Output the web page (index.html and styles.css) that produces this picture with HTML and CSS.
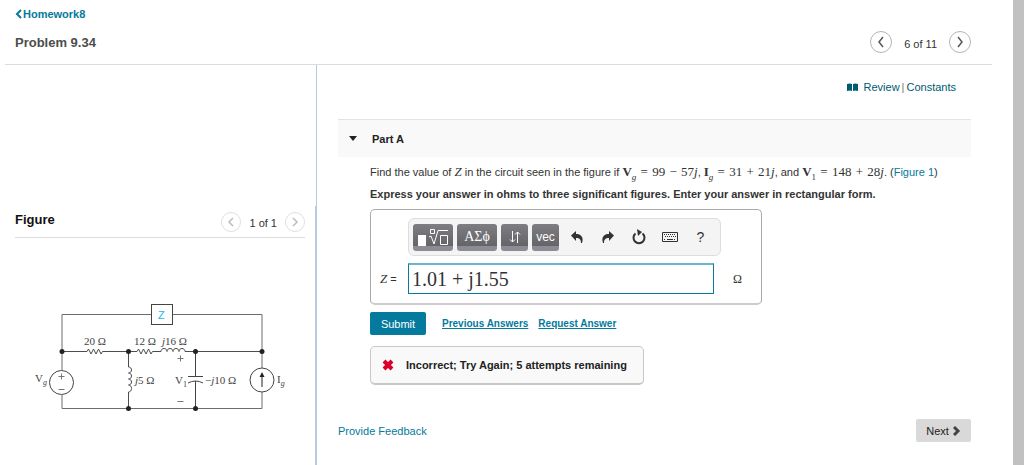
FILE: index.html
```html
<!DOCTYPE html>
<html lang="en">
<head>
    <meta charset="UTF-8">
    <meta name="viewport" content="width=device-width, initial-scale=1.0">
    <title>Problem 9.34</title>
    <link rel="stylesheet" href="styles.css">
</head>
<body>
    <div class="page">
        <header class="header">
            <div>
                <a class="back" href="#"><svg width="7" height="10" viewBox="0 0 7 10"><path d="M6 1L2 5l4 4" fill="none" stroke="currentColor" stroke-width="2"/></svg>Homework8</a>
                <h1>Problem 9.34</h1>
            </div>
            <div class="pager">
                <button class="round" aria-label="Previous problem"><svg width="8" height="12" viewBox="0 0 8 12"><path d="M6 1L2 6l4 5"/></svg></button>
                <span>6 of 11</span>
                <button class="round" aria-label="Next problem"><svg width="8" height="12" viewBox="0 0 8 12"><path d="M2 1l4 5-4 5"/></svg></button>
            </div>
        </header>

        <div class="columns">
            <aside class="left">
                <div class="left-top"></div>
                <div class="left-bottom">
                    <div class="figure-head">
                        <h2>Figure</h2>
                        <div class="pager small">
                            <button class="round" aria-label="Previous figure"><svg width="8" height="10" viewBox="0 0 8 10"><path d="M6 1L2 5l4 4"/></svg></button>
                            <span>1 of 1</span>
                            <button class="round" aria-label="Next figure"><svg width="8" height="10" viewBox="0 0 8 10"><path d="M2 1l4 4-4 4"/></svg></button>
                        </div>
                    </div>

                    <svg class="circuit" width="260" height="120" viewBox="30 298 260 120">
                        <g fill="none" stroke="#6d6d6d">
                            <!-- outer loop -->
                            <path d="M62 370V314.500H151M172 314.500H262V368M262 392V408.500H62V395"/>
                            <!-- middle rail with resistors and coil -->
                            <path d="M62 351.500H87l1.500-2.500 2.500 5 2.500-5 2.500 5 2.500-5 2.500 5 1.500-2.500H137l1.500-2.500 2.500 5 2.500-5 2.500 5 2.500-5 2.500 5 1.500-2.500H161c0-4 6-4 6 0 0-4 6-4 6 0 0-4 6-4 6 0 0-4 6-4 6 0H262" stroke="#4d4d4d"/>
                            <!-- vertical coil -->
                            <path d="M128.500 352V367c4 0 4 6 0 6 4 0 4 6 0 6 4 0 4 6 0 6 4 0 4 7 0 7V408" stroke="#4d4d4d"/>
                            <!-- capacitor -->
                            <path d="M195.500 352V376M195.500 381V408M188 376.500H203M188 383q7.500-4 15 0" stroke="#444"/>
                            <rect x="151.500" y="304.500" width="21" height="20" stroke="#444"/>
                            <circle cx="61.500" cy="382.500" r="12" stroke="#444"/>
                            <circle cx="262" cy="380" r="12" stroke="#444"/>
                            <path d="M262 387V375" stroke="#222"/>
                            <path d="M58.500 376.500h6M61.500 373.500v6M58.500 389.500h6M177.500 358.500h6M180.500 355.500v6M177.500 401.500h6" stroke="#777"/>
                        </g>
                        <g fill="#222">
                            <path d="M262 372l2.500 5h-5z"/>
                            <circle cx="62" cy="351.500" r="2.500"/>
                            <circle cx="128.500" cy="351.500" r="2.500"/>
                            <circle cx="195.500" cy="351.500" r="2.500"/>
                            <circle cx="262" cy="351.500" r="2.500"/>
                            <circle cx="128.500" cy="408.500" r="2.500"/>
                            <circle cx="195.500" cy="408.500" r="2.500"/>
                        </g>
                        <g class="labels">
                            <text x="84" y="345">20 Ω</text>
                            <text x="134" y="345">12 Ω</text>
                            <text x="162" y="345"><tspan font-style="italic">j</tspan>16 Ω</text>
                            <text x="135" y="384"><tspan font-style="italic">j</tspan>5 Ω</text>
                            <text x="205" y="384">−<tspan font-style="italic">j</tspan>10 Ω</text>
                            <text x="35" y="382">V<tspan class="sub" dy="3" font-style="italic">g</tspan></text>
                            <text x="175" y="384">V<tspan class="sub" dy="3">1</tspan></text>
                            <text x="277" y="383">I<tspan class="sub" dy="3" font-style="italic">g</tspan></text>
                            <text class="z" x="158" y="319">Z</text>
                        </g>
                    </svg>
                </div>
            </aside>

            <main class="right">
                <div class="links">
                    <svg width="11" height="9" viewBox="0 0 11 9"><path d="M0 1q3-1 5 0v7q-2-1-5 0zM6 1q2-1 5 0v7q-3-1-5 0z" fill="currentColor"/></svg>
                    <a href="#">Review</a><span class="bar">|</span><a href="#">Constants</a>
                </div>

                <h2 class="part"><span class="arrow"></span>Part A</h2>

                <div class="content">
                    <p>Find the value of <i class="math">Z</i> in the circuit seen in the figure if <span class="math"><b>V</b><sub><i>g</i></sub> <span class="op">=</span> 99 <span class="op">−</span> 57<i>j</i></span>, <span class="math"><b>I</b><sub><i>g</i></sub> <span class="op">=</span> 31 <span class="op">+</span> 21<i>j</i></span>, and <span class="math"><b>V</b><sub>1</sub> <span class="op">=</span> 148 <span class="op">+</span> 28<i>j</i></span>. (<a href="#">Figure 1</a>)</p>
                    <p class="strong">Express your answer in ohms to three significant figures. Enter your answer in rectangular form.</p>

                    <div class="answer">
                        <div class="toolbar">
                            <button class="key wide" aria-label="Templates"><svg width="32" height="20" viewBox="0 0 32 20"><path d="M1 8h8v11H1z" fill="#fff"/><path d="M13.500 2.500h4v4h-4zM12 10l2-1 3 8 4-13.500h10M23.500 8.500h7v9h-7z" fill="none" stroke="#fff"/></svg></button>
                            <button class="key wide greek">ΑΣϕ</button>
                            <button class="key" aria-label="Subscript and superscript"><svg width="12" height="14" viewBox="0 0 12 14"><path d="M3.500 1v11M1 9.500L3.500 12 6 9.500M8.500 13V2M6 4.500L8.500 2 11 4.500" fill="none" stroke="#fff"/></svg></button>
                            <button class="key">vec</button>
                            <button class="tool" aria-label="Undo"><svg width="12" height="12" viewBox="0 0 12 12"><path d="M0 4.500L5 0v3c5 0 8 3 6 9h-1c0-3-1-5-5-5v3z" fill="currentColor"/></svg></button>
                            <button class="tool" aria-label="Redo"><svg width="12" height="12" viewBox="0 0 12 12"><path d="M12 4.500L7 0v3C2 3-1 6 1 12h1c0-3 1-5 5-5v3z" fill="currentColor"/></svg></button>
                            <button class="tool" aria-label="Reset"><svg width="14" height="16" viewBox="0 0 14 16"><path d="M3.500 4.500a5.500 5.500 0 1 0 7 0" fill="none" stroke="currentColor" stroke-width="2"/><path d="M5 0l5 3-4 4z" fill="currentColor"/></svg></button>
                            <button class="tool" aria-label="Keyboard"><svg width="16" height="10" viewBox="0 0 16 10"><path d="M.500.500h15v9H.500z" fill="none" stroke="currentColor"/><path d="M2 2.500h12M3 4.500h11M2 7.500h2M12 7.500h2" fill="none" stroke="currentColor" stroke-dasharray="1 1"/><path d="M5 7.500h6" stroke="currentColor"/></svg></button>
                            <button class="tool help" aria-label="Help">?</button>
                        </div>
                        <div class="entry">
                            <label for="answer"><i>Z</i> =</label>
                            <input id="answer" type="text" value="1.01 + j1.55">
                            <span class="unit">Ω</span>
                        </div>
                    </div>

                    <div class="actions">
                        <button class="submit">Submit</button>
                        <a href="#">Previous Answers</a>
                        <a href="#">Request Answer</a>
                    </div>

                    <div class="feedback">
                        <svg width="12" height="12" viewBox="0 0 12 12"><path d="M2 2l8 8M10 2l-8 8" stroke="#d9002b" stroke-width="4"/></svg>
                        Incorrect; Try Again; 5 attempts remaining
                    </div>
                </div>

                <footer class="footer">
                    <a href="#">Provide Feedback</a>
                    <button class="next">Next <svg width="8" height="10" viewBox="0 0 8 10"><path d="M1 1l4 4-4 4" fill="none" stroke="#444" stroke-width="3"/></svg></button>
                </footer>
            </main>
        </div>
    </div>
</body>
</html>
```

FILE: styles.css
```css
* {
    box-sizing: border-box;
}
body {
    margin: 0;
    font-family: "Liberation Sans", Arial, sans-serif;
    font-size: 11px;
    line-height: 16px;
    color: #333;
    background: #fff;
}
.page {
    min-height: 100vh;
    display: flex;
    flex-direction: column;
    padding: 0 21px 0 5px;
    border-right: 11px solid #c1c1c1;
}
h1, h2, p {
    margin: 0;
}
a {
    color: #047a9c;
    text-decoration: none;
}
button {
    font-family: inherit;
    font-size: 11px;
    padding: 0;
    border: 0;
    cursor: pointer;
}
svg {
    flex: none;
}

/* header */
.header {
    display: flex;
    justify-content: space-between;
    height: 65px;
    padding: 6px 21px 0 10px;
    border-bottom: 1px solid #dcdcdc;
}
.back {
    display: flex;
    align-items: center;
    gap: 1px;
    font-weight: bold;
}
h1 {
    margin-top: 13px;
    font-size: 13px;
    color: #4d4d4d;
}
.pager {
    display: flex;
    align-items: center;
    gap: 12px;
}
.pager span {
    padding-top: 3px;
}
.header .pager {
    align-self: flex-start;
    margin-top: 25px;
}
.round {
    display: flex;
    align-items: center;
    justify-content: center;
    width: 22px;
    height: 22px;
    border: 1px solid #b5b5b5;
    border-radius: 50%;
    background: #fff;
}
.round path {
    fill: none;
    stroke: #555;
    stroke-width: 1.5;
}
.small {
    gap: 8px;
}
.small .round {
    width: 20px;
    height: 20px;
    border-color: #e0e0e0;
}
.small .round path {
    stroke: #bbb;
}

/* figure column */
.columns {
    display: flex;
    flex: 1;
}
.left {
    display: flex;
    flex-direction: column;
    flex: 0 0 312px;
}
.left-top {
    height: 141px;
    border-right: 1px solid #b8cbdc;
}
.left-bottom {
    flex: 1;
    padding: 0 10px;
    border-right: 2px solid #b8cbdc;
}
.figure-head {
    display: flex;
    justify-content: space-between;
    align-items: center;
    height: 32px;
    border-bottom: 1px solid #dcdcdc;
}
.figure-head h2 {
    font-size: 13px;
    margin-bottom: 4px;
    color: #111;
}
.circuit {
    display: block;
    margin: 60px 0 0 15px;
}
.labels {
    font-family: "Liberation Serif", "Times New Roman", serif;
    font-size: 11px;
    fill: #444;
}
.sub {
    font-size: 8px;
}
.labels .z {
    font-family: "Liberation Sans", Arial, sans-serif;
    fill: #1fb5e0;
}

/* problem column */
.right {
    flex: 1;
    padding: 14px 21px 0;
}
.links {
    display: flex;
    align-items: center;
    justify-content: flex-end;
    padding-right: 15px;
    color: #005a70;
}
.links svg {
    margin-right: 6px;
}
.links a {
    color: #005a70;
}
.bar {
    margin: 0 2px;
    color: #777;
}
.part {
    display: flex;
    align-items: center;
    gap: 15px;
    height: 38px;
    margin-top: 24px;
    padding-left: 11px;
    font-size: 11px;
    color: #222;
    background: #f9f9f9;
    border-top: 1px solid #e3e3e3;
}
.arrow {
    border: 4px solid transparent;
    border-top: 5px solid #222;
    border-bottom: 0;
}
.content {
    padding: 4px 0 0 32px;
}
.content p {
    line-height: 22px;
}
.strong {
    font-weight: bold;
}
.math {
    font-family: "Liberation Serif", "Times New Roman", serif;
    font-size: 13px;
}
.math sub {
    font-size: 9px;
    line-height: 0;
}
.op {
    margin: 0 1px;
}
.answer {
    max-width: 392px;
    margin-top: 4px;
    padding: 8px 8px 9px;
    border: 1px solid #aaa;
    border-bottom: 2px solid #ccc;
    border-radius: 5px;
}
.toolbar {
    display: flex;
    align-items: center;
    gap: 4px;
    height: 38px;
    margin: 0 32px 0 29px;
    padding: 0 4px;
    background: #f4f4f4;
    border: 1px solid #ddd;
    border-radius: 6px;
}
.key {
    display: flex;
    align-items: center;
    justify-content: center;
    width: 27px;
    height: 27px;
    font-size: 12px;
    color: #fff;
    background: linear-gradient(#7d7d82, #646469 80%, #8c8c95 81%);
    border-radius: 3px;
}
.wide {
    width: 40px;
}
.greek {
    font-family: "Liberation Serif", "Times New Roman", serif;
    font-size: 14px;
}
.tool {
    display: flex;
    align-items: center;
    justify-content: center;
    width: 27px;
    height: 27px;
    color: #333;
    background: none;
}
.help {
    font-size: 14px;
}
.entry {
    display: flex;
    align-items: center;
    margin-top: 7px;
}
.entry label {
    width: 29px;
    padding-left: 1px;
}
.entry label i {
    font-family: "Liberation Serif", "Times New Roman", serif;
    font-size: 13px;
}
.entry input {
    flex: 1;
    min-width: 0;
    height: 31px;
    padding: 0 3px;
    font-family: "Liberation Serif", "Times New Roman", serif;
    font-size: 20px;
    color: #333;
    background: #fff;
    border: 1px solid #047a9c;
    border-top: 2px solid #6fb3c6;
    outline: none;
}
.unit {
    width: 39px;
    padding-left: 19px;
    font-family: "Liberation Serif", "Times New Roman", serif;
    font-size: 12px;
}
.actions {
    display: flex;
    align-items: center;
    gap: 10px;
    margin-top: 7px;
}
.actions a {
    font-size: 10px;
    font-weight: bold;
    text-decoration: underline;
}
.submit {
    width: 56px;
    height: 23px;
    margin-right: 6px;
    color: #fff;
    background: #047a9c;
    border-radius: 2px;
}
.feedback {
    display: flex;
    align-items: center;
    gap: 12px;
    width: fit-content;
    height: 39px;
    margin-top: 11px;
    padding: 0 16px 0 11px;
    font-weight: bold;
    color: #222;
    background: #f9f9f9;
    border: 1px solid #c8c8c8;
    border-bottom-width: 2px;
    border-radius: 5px;
}
.footer {
    display: flex;
    align-items: center;
    justify-content: space-between;
    margin-top: 34px;
}
.next {
    display: flex;
    align-items: center;
    justify-content: center;
    gap: 4px;
    width: 55px;
    height: 23px;
    color: #222;
    background: #d9d9d9;
    border-radius: 2px;
}
```
